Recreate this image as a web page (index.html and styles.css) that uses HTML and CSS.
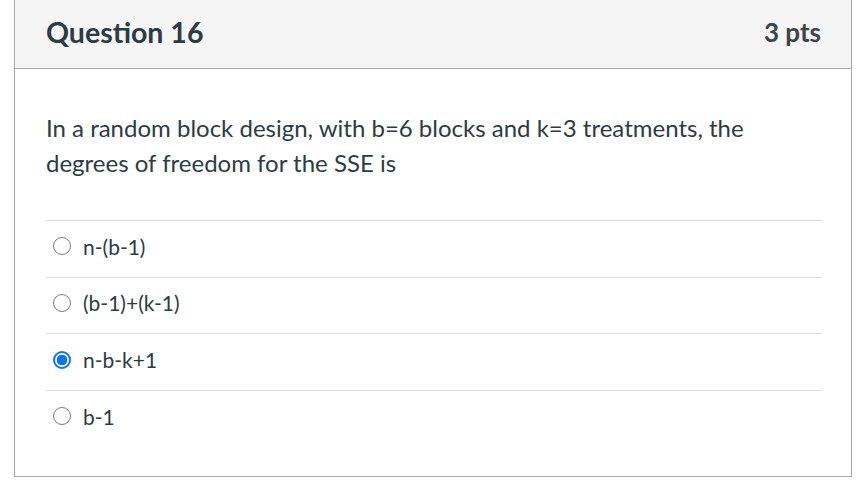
FILE: index.html
```html
<!DOCTYPE html>
<html lang="en">
<head>
<meta charset="utf-8">
<title>Question 16</title>
<link rel="stylesheet" href="styles.css">
</head>
<body>
<div class="card">
  <div class="header">
    <h2 class="title">Question 16</h2>
    <span class="pts">3 pts</span>
  </div>
  <div class="content">
    <p class="question">In a random block design, with b=6 blocks and k=3 treatments, the degrees of freedom for the SSE is</p>
    <div class="answers">
      <label class="answer"><span class="radio"></span><span class="label">n-(b-1)</span></label>
      <label class="answer"><span class="radio"></span><span class="label">(b-1)+(k-1)</span></label>
      <label class="answer"><span class="radio checked"></span><span class="label">n-b-k+1</span></label>
      <label class="answer"><span class="radio"></span><span class="label">b-1</span></label>
    </div>
  </div>
</div>
</body>
</html>
```
FILE: styles.css
```css
html, body {
  margin: 0;
  padding: 0;
  background: #ffffff;
}
body {
  font-family: Lato, "Open Sans", "Liberation Sans", sans-serif;
  color: #2d3b45;
}
.card {
  margin-left: 14px;
  width: 836px;
  height: 476px;
  box-sizing: content-box;
  border: 1px solid #a8a8a8;
  border-top: none;
}
.header {
  height: 69px;
  box-sizing: border-box;
  background: #f5f5f5;
  border-bottom: 1px solid #a8a8a8;
  display: flex;
  align-items: center;
  justify-content: space-between;
  padding: 0 30px 4px 31px;
}
.title {
  margin: 0;
  font-size: 28.5px;
  font-weight: 700;
  color: #2d3b45;
}
.pts {
  font-size: 26px;
  font-weight: 700;
  color: #3c4349;
}
.content {
  padding: 41px 29px 0 31px;
}
.question {
  margin: 0 0 40px;
  font-size: 24px;
  line-height: 35px;
}
.answers {
  display: flex;
  flex-direction: column;
}
.answer {
  display: flex;
  align-items: center;
  height: 56.67px;
  box-sizing: border-box;
  border-top: 1px solid #dcdcdc;
  padding-left: 7px;
  padding-bottom: 5px;
  gap: 12px;
  font-size: 21px;
}
.radio {
  width: 18px;
  height: 18px;
  box-sizing: border-box;
  border: 1.5px solid #7a7a7a;
  border-radius: 50%;
  background: #fff;
  flex: none;
}
.radio.checked {
  border: 2px solid #0b74f0;
  background: radial-gradient(circle, #0b74f0 0 5px, #ffffff 5.6px);
}
```
